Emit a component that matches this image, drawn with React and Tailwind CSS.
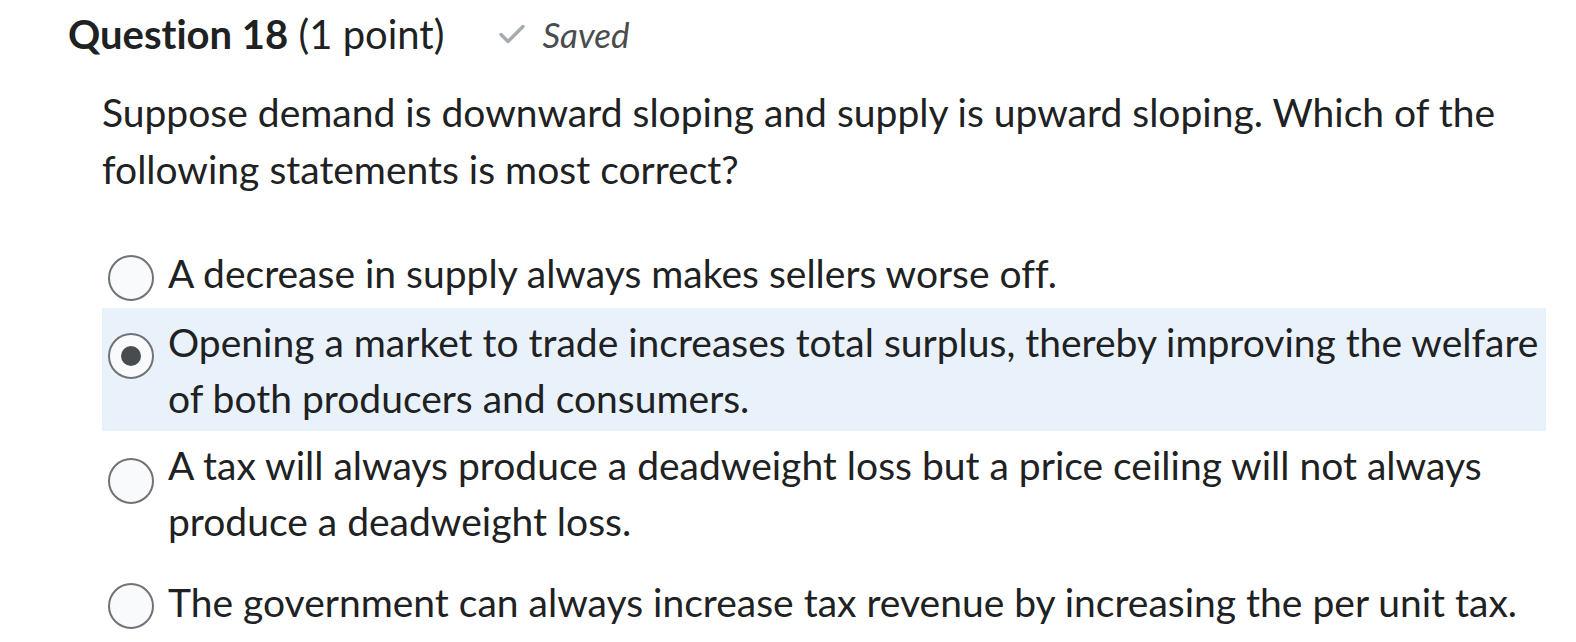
import React from 'react';

const options = [
  { id: 'a', text: 'A decrease in supply always makes sellers worse off.', dot: 'mt-[10px]', box: 'mt-0' },
  {
    id: 'b',
    text: 'Opening a market to trade increases total surplus, thereby improving the welfare of both producers and consumers.',
    dot: 'mt-[19px]',
    box: 'mt-[2px]',
    checked: true,
  },
  {
    id: 'c',
    text: 'A tax will always produce a deadweight loss but a price ceiling will not always produce a deadweight loss.',
    dot: 'mt-[21px]',
    box: 'mt-0',
  },
  { id: 'd', text: 'The government can always increase tax revenue by increasing the per unit tax.', dot: 'mt-[9px]', box: 'mt-[14px]' },
];

function Radio({ checked, className }) {
  return (
    <span
      className={`flex h-[46px] w-[46px] shrink-0 items-center justify-center rounded-full border-2 border-[#6f7377] bg-[#f9fafc] ${className}`}
    >
      {checked && <span className="h-[20px] w-[20px] rounded-full bg-[#494c4e]" />}
    </span>
  );
}

export default function App() {
  const [selected, setSelected] = React.useState('b');

  return (
    <div
      className="min-h-screen bg-white pl-[68px] pt-[8px] text-[#202122] [font-variant-ligatures:none]"
      style={{ fontFamily: 'Lato, "Noto Sans", sans-serif' }}
    >
      <div className="flex items-center">
        <h2 className="text-[40px] leading-[48px]">
          <span className="font-bold">Question 18</span> (1 point)
        </h2>
        <div className="ml-[54px] flex items-center gap-[16px] text-[#494c4e]">
          <svg width="28" height="22" viewBox="0 0 28 22" fill="none">
            <path d="M3 11.5l7 7L25 3.5" stroke="#a5acb0" strokeWidth="3.4" strokeLinecap="round" strokeLinejoin="round" />
          </svg>
          <span className="text-[35px] italic">Saved</span>
        </div>
      </div>

      <p className="ml-[34px] mt-[23px] max-w-[1420px] text-[39px] leading-[57px]">
        Suppose demand is downward sloping and supply is upward sloping. Which of the following statements is most correct?
      </p>

      <div className="ml-[34px] mt-[41px] w-[1444px]">
        {options.map((opt) => {
          const isSel = selected === opt.id;
          return (
            <label
              key={opt.id}
              onClick={() => setSelected(opt.id)}
              className={`flex cursor-pointer items-start gap-[14px] pb-[5px] pl-[6px] pt-[6px] ${opt.box} ${isSel ? 'bg-[#e9f2fb]' : ''}`}
            >
              <Radio checked={isSel} className={opt.dot} />
              <span className="text-[39px] leading-[56px]">{opt.text}</span>
            </label>
          );
        })}
      </div>
    </div>
  );
}
